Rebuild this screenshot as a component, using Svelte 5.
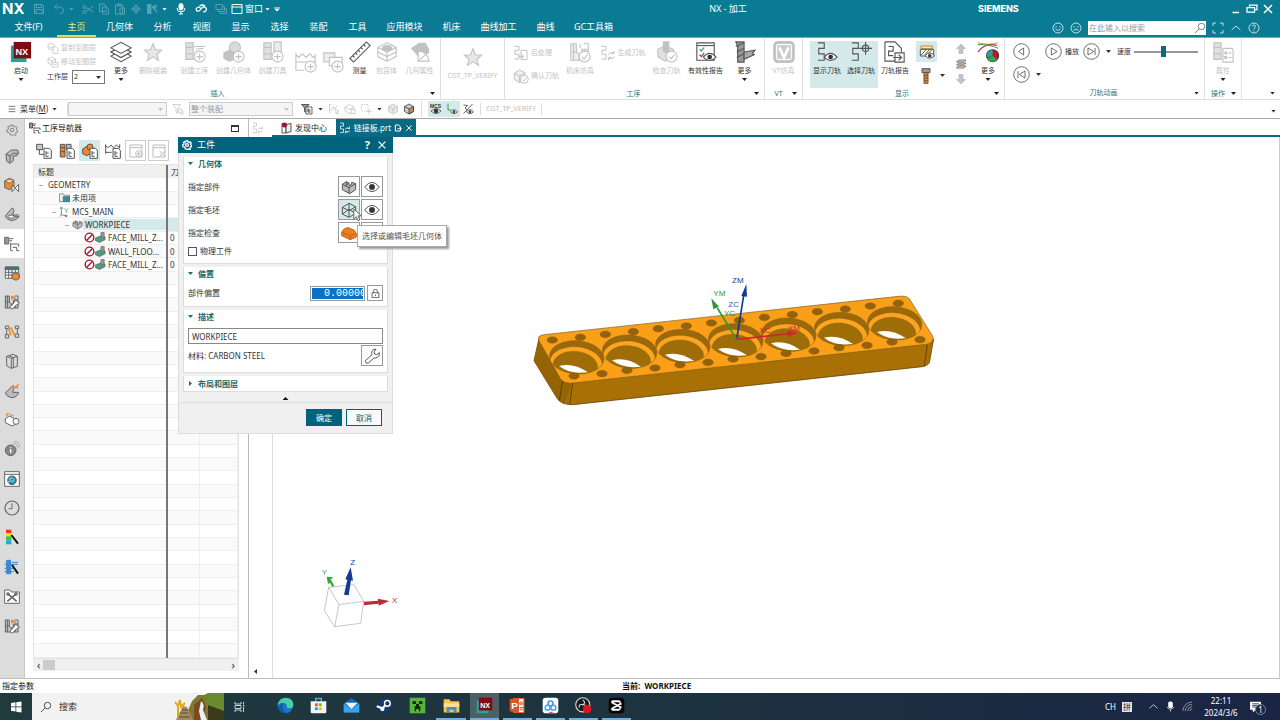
<script lang="ts">
	type Tool = { icon: string; label: string; size?: string; off?: boolean; on?: boolean; caret?: boolean };

	type TreeRow = { depth: number; label: string; icons: string[]; open?: boolean; value?: string; active?: boolean };

	// shared fragments, all on a 24 x 24 grid
	const plus = '<circle cx="17" cy="17" r="6" fill="#fff"/><path d="M17 13.5v7M13.5 17h7"/>';
	const tick = '<circle cx="17" cy="17" r="6" fill="#fff"/><path d="M14 17l2.5 2.5 4-5"/>';
	const eye = '<path d="M9 17.5q7-8 14 0q-7 7.500-14 0z" fill="#fff"/><circle cx="16" cy="17.500" r="2.600" fill="#333" stroke="none"/>';
	const track = '<path d="M2 2h7v6H3v6h6v7H2"/>';
	const block = '<path d="M2 2h8v18H2z" fill="currentColor" fill-opacity=".5"/><path d="M2 7h8M2 14h8"/>';
	const ghostCube = '<path d="M2 8l8-5 8 4v9l-8 6-8-5z" fill="currentColor" fill-opacity=".25"/><path d="M2 8l8 4 8-5M10 12v10"/>';
	const treeDoc = '<path d="M12 8h8l3 3v12H12z" fill="#fff"/><path d="M15 12v8h4M15 15h4"/>';
	const machine = '<path d="M2 3h6v9l3 3h3V9h7v12H2z" fill="currentColor" fill-opacity=".25"/><path d="M5 3v18M8 12H2M17 9v12M11 15v6"/><path d="M16 3h5v6M12 8V3"/>';

	const icons: Record<string, string> = {
		nx: '<path d="M1 5h17v18H1z" fill="#2aa198" stroke="none"/><path d="M4 1h19v18H4z" fill="#7d0d12" stroke="none"/><text x="6" y="15" font-size="10" font-weight="700" font-family="Liberation Sans, sans-serif" fill="#fff" stroke="none">NX</text>',
		copyLayer: '<path d="M2 5l6-3 6 3v8l-6 3-6-3zM2 9l6 3 6-3"/><path d="M12 10h6l4 4v9H12z" fill="#fff"/>',
		moveLayer: '<path d="M2 6l7-4 8 4v8l-7 4-8-4zM2 6l8 4 7-4M10 10v8"/><path d="M10 13h12v9H10z" fill="#fff"/><path d="M13 17h6"/>',
		layers: '<path d="M1 16.500l11 6 11-6-11-6z" fill="#fff"/><path d="M1 12l11 6 11-6-11-6z" fill="#fff"/><path d="M1 7.500l11 6 11-6-11-6z" fill="#fff"/>',
		star: '<path d="M12 3l2.700 6.500 6.800.5-5.200 4.500 1.700 6.500-6-3.700-6 3.700 1.700-6.500L2.500 10l6.800-.5z" fill="currentColor" fill-opacity=".4"/>',
		createOp: block + '<path d="M11 6h12M13 9l8-1M12 12h9"/>' + plus,
		createGeo: '<path d="M1 13l6-3 5 3v7l-5 2-6-3z" fill="currentColor"/><circle cx="13" cy="7" r="6" fill="currentColor" fill-opacity=".6"/>' + plus,
		createTool: block + '<path d="M13 1h8v12h-8z" fill="currentColor" fill-opacity=".35"/>' + plus,
		zigPlus: '<path d="M1 4l3 3 4-4 4 4 4-4 4 4 3-3M1 2v19h9M1 12h22M22 4v8"/>' + plus,
		squaresPlus: '<path d="M2 2h12v10H2z" fill="currentColor" fill-opacity=".3"/><path d="M8 7h14v9H8z" fill="#fff"/>' + plus,
		ruler: '<path d="M1 19L19 1l4 4L5 23z" fill="#fff"/><path d="M4 16l2 2M7 13l2 2M10 10l2 2M13 7l2 2M16 4l2 2"/>',
		bbox: '<path d="M2 7l10-5 10 5v10l-10 5-10-5zM2 7l10 5 10-5M12 12v10"/><ellipse cx="12" cy="8" rx="5" ry="3" fill="currentColor"/><path d="M2 12l10 5 10-5"/>',
		geomAttr: '<path d="M2 8l9-6h7l4 7v4L10 17z" fill="currentColor" stroke="none"/><path d="M10 11q10 0 12 11H10z" fill="#fff"/><path d="M10 22L20 13"/>',
		post: track + '<path d="M12 8h9v14h-9z" fill="#fff"/><path d="M8 17h8l-3-3M16 17l-3 3"/>',
		verify: ghostCube + tick,
		machineSim: machine + tick,
		generate: track + '<path d="M12 15q4-6 9-2M21 9v4h-4M22 17q-4 6-9 2M13 23v-4h4"/>',
		checkPath: '<path d="M2 9l8-4 9 4v8l-9 5-8-5z" fill="currentColor" fill-opacity=".5"/><path d="M8 1h6v10l-3 2-3-2z" fill="currentColor"/>' + tick,
		report: '<path d="M2 2h19v19H2z" fill="#fff"/><path d="M2 5h19"/><path d="M5 9l2 2 3-4" stroke="#2fae4a"/><path d="M5 15l2 2 3-4" stroke="#c02437"/>' + eye,
		cutter: '<path d="M2 1h9v22H4V6z" fill="#999"/><path d="M2 6l9-4M3 12l8-4M3 18l8-4"/><path d="M11 12l12-2-3 4 2 1-11 5z" fill="#aaa"/>',
		vt: '<rect x="1" y="1" width="22" height="22" rx="4" fill="#c9c9c9" stroke="#b5b5b5"/><rect x="4" y="4" width="16" height="16" rx="2" fill="none" stroke="#fff"/><path d="M7 7l5 11 5-11" stroke="#fff" stroke-width="3"/>',
		pathEye: track + eye,
		pathCross: track + '<path d="M17 1v14M10 8h14"/><circle cx="17" cy="8" r="3.500"/>',
		pathDoc: '<path d="M1 1h11l7 7v4M1 1v21h12"/><path d="M5 6h5v5H5v5h5"/><path d="M12 13h10v10H12z" fill="#fff"/><path d="M10 18h9l-3-3M19 18l-3 3"/>',
		hatchEye: '<path d="M3 3h17v4H3z" fill="#ffe9b8" stroke="#c98a1a"/><path d="M2 8h20v10H2z" fill="#fff"/><path d="M3 17l8-9M8 17l8-9M14 14l6-6"/>' + eye,
		bolt: '<path d="M6 1h12v6H6z" fill="#999"/><path d="M9 7h6v16H9z" fill="#e5873a" stroke="#8d4d18"/><path d="M9 12l6-2M9 16l6-2M9 20l6-2"/>',
		arrowUp: '<path d="M12 2l9 9h-5v10H8V11H3z" fill="#c4c4c4" stroke="#bbb"/>',
		arrowDown: '<path d="M12 22l9-9h-5V3H8v10H3z" fill="#c4c4c4" stroke="#bbb"/>',
		levels: '<path d="M3 8l5-4h14l-5 4zM3 14l5-4h14l-5 4zM3 20l5-4h14l-5 4z" fill="#ddd"/><path d="M7 14h8" stroke="#e5873a"/>',
		pathChart: '<path d="M1 2q12 3 22 0" stroke="#d9a52a"/><path d="M1 12Q9 1 22 5" stroke="#c02437"/><path d="M1 4q10-1 22 4" stroke="#37a34a"/><circle cx="17" cy="16" r="6.500" fill="#c8102e" stroke="#333"/><path d="M17 16V9.500A6.500 6.500 0 0 0 11 18z" fill="#19a7a0" stroke="none"/><path d="M17 16l-6 3a6.500 6.500 0 0 0 11 1z" fill="#2da84a" stroke="none"/>',
		playBack: '<circle cx="12" cy="12" r="11"/><path d="M15 7v10l-7-5z"/>',
		play: '<circle cx="12" cy="12" r="11"/><path d="M9 7v10l8-5z"/>',
		stepNext: '<circle cx="12" cy="12" r="11"/><path d="M7 7v10l8-5zM17 7v10"/>',
		stepPrev: '<circle cx="12" cy="12" r="11"/><path d="M17 7v10l-8-5zM7 7v10"/>',
		props: block + '<path d="M12 8h10l1 2v13H12z" fill="#fff"/><path d="M14 12h2v2h-2zM18 13h3M14 17h2v2h-2zM18 18h3"/>',
		save: '<path d="M3 3h15l3 3v15H3zM7 3v6h10V3M6 21v-8h12v8"/>',
		undo: '<path d="M8 3L3 8l5 5M3 8h11q7 1 7 7t-7 6"/>',
		cut: '<circle cx="5" cy="18" r="3"/><circle cx="5" cy="8" r="3"/><path d="M8 9l14 9M8 17L22 7"/>',
		copy: '<path d="M3 2h9l4 4v11H3z"/><path d="M9 8h8l4 4v10H9z"/>',
		paste: '<path d="M3 4h14v18H3zM7 2h6v4H7zM12 10h9v12h-9z"/>',
		move: '<circle cx="12" cy="12" r="6"/><path d="M12 2v20M2 12h20"/>',
		flip: '<path d="M3 3h7v18H3z" fill="currentColor"/><path d="M12 8l9-4-3 7 4 8z" fill="currentColor"/>',
		mic: '<rect x="8" y="1" width="8" height="13" rx="4" fill="currentColor"/><path d="M4 10q0 8 8 8t8-8M12 18v4M8 22h8"/>',
		touch: '<path d="M12 12q-3-5-7-3t-2 6q4 4 9-3t9-3q3 2 1 6t-6 2M9 6q6-4 11 0" stroke-width="2.500"/>',
		cascade: '<path d="M2 3h13v10H2zM6 13v4h13V7h-4M10 17v4h13V11h-4"/>',
		window: '<path d="M2 3h20v18H2zM2 8h20"/>',
		smile: '<circle cx="12" cy="12" r="10"/><path d="M8 8v3M16 8v3M7 14q5 6 10 0"/>',
		sad: '<circle cx="12" cy="12" r="10"/><path d="M8 8v3M16 8v3M7 17q5-6 10 0"/>',
		search: '<circle cx="15" cy="9" r="6.500"/><path d="M10 14l-8 8"/>',
		full: '<path d="M2 8V2h6M16 2h6v6M22 16v6h-6M8 22H2v-6"/>',
		up: '<path d="M3 16l9-8 9 8"/>',
		help: '<circle cx="12" cy="12" r="10"/><path d="M9 9q0-3 3-3t3 3q0 2-3 4v2M12 17v2"/>',
		min: '<path d="M5 19h13" stroke-width="3"/>',
		restore: '<path d="M7 9V4h15v9h-5M2 9h15v9H2z" stroke-width="2.500"/>',
		close: '<path d="M4 4l16 16M20 4L4 20" stroke-width="3"/>',
		menu: '<path d="M2 4h20M2 12h20M2 20h20" stroke-width="2"/>',
		filter: '<path d="M2 3h15l-6 8v10l-3-2v-8z"/><path d="M14 12h5v4h3v6h-4v-3h-4z"/>',
		filterDark: '<path d="M1 3h15l-5 7v9l-4-2v-7z" fill="#999"/><path d="M10 8h12v14H10z" fill="#fff"/><path d="M14 11v7h5M14 14h5" stroke-width="2"/>',
		snap: '<path d="M3 20V3h4M20 14v7h-4M6 16l5-9 3 6 4-8" /><circle cx="17" cy="17" r="3"/>',
		solid: '<path d="M2 8l9-5 9 5v8l-9 5-9-5zM2 8l9 5 9-5"/><path d="M14 13h8v8h-8z" fill="#fff"/>',
		marquee: '<path d="M3 3h13v13H3z" stroke-dasharray="3 2"/><path d="M18 12v10M13 17h10"/>',
		shade: '<path d="M3 7l9-5 9 5v10l-9 5-9-5z" fill="currentColor" fill-opacity=".4"/><path d="M3 7l9 5 9-5M12 12v10"/>',
		shadeOn: '<path d="M3 7l9-5 9 5v10l-9 5-9-5z" fill="#ccc"/><path d="M12 12l9-5v10l-9 5z" fill="#c48a5a"/><path d="M3 7l9 5"/>',
		mcs: '<text x="0" y="9" font-size="10" font-weight="700" font-family="Liberation Sans, sans-serif" fill="#333" stroke="none">MCS</text><path d="M2 16q10-9 20 0q-10 10-20 0z" fill="#fff"/><circle cx="12" cy="16" r="4" fill="#333"/>',
		axisEye: '<path d="M4 1v13h6" stroke="#2da84a" stroke-width="2"/>' + eye,
		hideEye: '<path d="M3 21L21 2M3 4l8 1-5 5 4 4"/>' + eye,
		gear: '<circle cx="12" cy="12" r="3.500"/><path d="M10 2h4l.6 3 2.400 1 2.600-1.600 2.500 2.800-1.600 2.600.8 2.200 1.700 1v3l-3 .8-1 2 1.200 2.600-3 2.100-2.400-1.800-2 .5L10.500 22l-3-1-.3-3-2-1.500-3-.3L1.500 12l3-1.500.6-2.400L3.500 5.500l2.700-2 2.400 1.700z"/>',
		railBody: '<path d="M3 9l8-6h9l2 4-3 5h-5v7l-5 4-5-3z" fill="#bbb"/><path d="M3 9l6 3v10M9 12l5-4h8"/>',
		railGeo: '<path d="M1 6l7-4 7 3v10l-7 4-7-3z" fill="#ee8a2d"/><path d="M1 6l7 3 7-4M12 12l10 10V11L12 22z" fill="#fff"/>',
		railPart: '<path d="M2 15l10-12q3 1 3 4l-2 7 8-1q2 1 1 4-5 5-11 5-7-1-9-7z" fill="#bbb"/><ellipse cx="11" cy="16" rx="5" ry="2.500" fill="#eee"/><path d="M13 14q3 3 9 2"/>',
		railNav: '<path d="M1 2h6v10H1z" fill="#999"/><path d="M8 4h6M8 7h4M10 10v12h3M10 12h12v4M13 17h6v5h4"/>',
		railTable: '<path d="M2 3h20v17H2z" fill="#fff"/><path d="M2 3h20v4H2z" fill="#197f96"/><path d="M2 11h20M2 15h20M7 3v17M12 3v17M17 3v17"/><path d="M12 14l5-2 6 2v6l-5 3-6-3z" fill="#ee8a2d"/>',
		railMachine: machine + '<path d="M12 3l6 5" stroke="#ee8a2d" stroke-width="3"/><path d="M9 20l7-8q0-3 3-3l1 3 3 1q0 3-4 3l-7 7z" fill="#fff"/>',
		railFlow: '<path d="M2 3h5v4H2zM2 16h5v5H2zM17 3h5v4h-5zM17 15h5v5h-5zM4 7v9M20 7v8"/><path d="M7 5l3 12M10 5l7 14" stroke="#ee8a2d" stroke-width="2.500"/>',
		railBook: '<path d="M4 5l10-3 6 3v15l-9 3-7-4zM4 5l7 3v15M11 8l9-3M8 4l6 3v14"/>',
		railAngle: '<path d="M2 15l10-10 3 3-2 6h9q-2 8-11 8-7-1-9-7z" fill="#bbb"/><path d="M13 3l4 4 5-5M20 3v6" stroke="#ee8a2d" stroke-width="2"/>',
		railFind: '<path d="M2 10l6-4 10 5v7l-6 3-10-5z" fill="#fff"/><path d="M2 5l3-3 10 4M5 2v5" stroke="#ee8a2d"/><circle cx="18" cy="14" r="4.500" fill="#fff"/>',
		railInfo: '<circle cx="10" cy="14" r="8" fill="#888"/><path d="M10 12v6M10 9v1" stroke="#fff" stroke-width="2"/><path d="M14 3q6 1 8 8M15 0q8 1 9 9" stroke="#aaa"/>',
		railWeb: '<path d="M1 1h22v22H1zM1 5h22" fill="#fff"/><circle cx="12" cy="14" r="6.500" fill="#1d87a0"/><path d="M8 12l4-2 3 3-2 4zM6 16h3" stroke="#bfe6ee"/>',
		railClock: '<circle cx="12" cy="12" r="10.500" stroke-width="1.800"/><path d="M12 5v8H7"/>',
		railColor: '<path d="M3 1h8v5H3z" fill="#e33" stroke="none"/><path d="M3 6h8v5H3z" fill="#fd0" stroke="none"/><path d="M3 11h8v6H3z" fill="#3c3" stroke="none"/><path d="M3 17h8v6H3z" fill="#2ad" stroke="none"/><path d="M11 9l10 13" stroke="#111" stroke-width="3"/>',
		railAnalyse: '<path d="M4 2h6v20H4z" fill="#3f86c6" stroke="#3f86c6"/><path d="M1 8h20M1 14h14M1 19h14M12 5h9" stroke="#3f86c6"/><path d="M12 9l9 13" stroke="#111" stroke-width="3"/>',
		railTools: '<path d="M1 3h8l2 3h12v17H1z" fill="#fff"/><path d="M5 8l14 12M19 8L5 20" stroke-width="2.500"/><circle cx="6" cy="9" r="2"/><circle cx="18" cy="9" r="2"/>',
		treeOp: '<path d="M1 2h9v8H1z" fill="#ccc"/><path d="M5 10v7h7"/>' + treeDoc,
		treeTool: '<path d="M2 2h7v19H2z" fill="#e5873a"/><path d="M2 7h7M2 13h7M11 2h7v8h-7z" fill="#bbb"/>' + treeDoc,
		treeGeo: '<path d="M1 9l6-4 6 3v8l-6 3-6-3z" fill="#ee8a2d"/><circle cx="12" cy="6" r="4.500" fill="#ee8a2d"/>' + treeDoc,
		treeZig: '<path d="M1 4l4 3 4-4 4 4 4-4 5 4M1 2v14M1 14h9M22 2v6"/>' + treeDoc,
		newTab: '<path d="M3 3h18v18H3zM3 7h18"/><circle cx="16" cy="16" r="4.500" fill="#fff"/><path d="M16 13.500v5M13.500 16h5"/>',
		closeTab: '<path d="M3 3h18v18H3zM3 7h18"/><path d="M13 12l8 8M21 12l-8 8"/>',
		folder: '<path d="M1 4h8l2 3h12v14H1z" fill="#e6f3f5"/><path d="M9 10h14v11H9z" fill="#2b93a3"/>',
		csys: '<path d="M5 3v16l12 3M5 19L2 23" stroke="#555"/><path d="M2 6l3-4 3 4" stroke="#2da84a" stroke-width="2"/><path d="M12 5l4 5 4-5M16 10v5" stroke="#2da84a"/><path d="M13 19l5 3-5 1" stroke="#c02437"/>',
		work: '<path d="M2 8l6-4 4 2v4l4-2V5l6 2v9l-9 6-11-6z" fill="#bbb"/><path d="M2 8l10 5 10-6M12 13v9M8 4v7M12 6l-4 3"/>',
		ban: '<circle cx="12" cy="12" r="9.500" stroke="#a3142a" stroke-width="3" fill="#fff"/><path d="M5.500 5.500l13 13M5.500 18.500l13-13" stroke="none"/><path d="M5.500 18.500l13-13" stroke="#a3142a" stroke-width="3"/>',
		mill: '<path d="M1 13l12-5 9 3v6l-12 6-9-4z" fill="#4d9a86"/><path d="M13 1h7v10l-4 2-3-2z" fill="#999"/>',
		view: '<path d="M1 12q11-14 22 0q-11 14-22 0z"/><circle cx="12" cy="12" r="4" fill="#333"/>',
		wire: '<path d="M2 8l10-6 10 5v10l-10 6-10-5zM2 8l10 5 10-6M12 13v10M12 2v9l10 6M2 18l10-7"/>',
		check: '<path d="M1 11q3-7 10-7l9 4 3 5v5l-9 4-13-6z" fill="#ee7d1c" stroke="#c2661a"/><path d="M1 11l13 5 9-3M14 16v6" stroke="#c2661a"/>',
		lock: '<path d="M3 10h18v13H3zM7 10V6q0-5 5-5t5 5v4M12 15v4" stroke-width="2"/>',
		wrench: '<path d="M2 19L12 10q-2-6 3-8l3 0-3 4 1 3 3 1 4-3q1 7-6 8l-2 0L6 23q-3 1-4-4z"/>',
		discover: '<path d="M2 3h8v19H2z" fill="#fff"/><path d="M10 5l10-2v16l-10 3z" fill="#eee"/><circle cx="7" cy="6" r="5" fill="#9d1330" stroke="none"/>',
		pin: '<path d="M4 3h10l5 5v13H4z" stroke-width="3"/><path d="M10 14h12M18 10l4 4-4 4" stroke-width="2.500"/>',
		windows: '<path d="M2 4l9-1.500V11H2zM12.500 2.300L23 1v10H12.500zM2 12.500h9V21l-9-1.500zM12.500 12.500H23v10.500l-10.500-1.500z" fill="#fff" stroke="none"/>',
		taskView: '<path d="M2 2v4h12V2M2 22v-4h12v4M2 9h12v6H2zM19 2v5M19 11v11M18 9h3" stroke="#fff"/>',
		edge: '<circle cx="12" cy="12" r="11" fill="#1878c8" stroke="none"/><path d="M1 10Q4 1 13 1q10 1 10 10 0 5-6 5-4 0-3-3 0-5-6-5Q3 8 1 12z" fill="#46cfa0" stroke="none"/><path d="M8 12q-2 8 7 11-10 1-13-8 1-6 7-6z" fill="#135aa6" stroke="none"/>',
		store: '<path d="M8 6V2h8v4" stroke="#3fb5e8" stroke-width="2"/><path d="M1 6h22v15q0 2-2 2H3q-2 0-2-2z" fill="#f4f4f4" stroke="none"/><path d="M7 9h4v4H7z" fill="#f25022" stroke="none"/><path d="M12.500 9h4v4h-4z" fill="#7fba00" stroke="none"/><path d="M7 14.500h4v4H7z" fill="#00a4ef" stroke="none"/><path d="M12.500 14.500h4v4h-4z" fill="#ffb900" stroke="none"/>',
		mail: '<path d="M1 9l11-8 11 8v13H1z" fill="#1267b0" stroke="none"/><path d="M3 8h18l-9 9z" fill="#e9f4fb" stroke="none"/><path d="M1 9l11 8 11-8v13H1z" fill="#39a5e6" stroke="none"/>',
		steam: '<circle cx="12" cy="12" r="11" fill="#14386b" stroke="none"/><circle cx="16" cy="9" r="4" stroke="#fff" stroke-width="2"/><path d="M1 13l8 3 4-4" stroke="#fff" stroke-width="3"/><circle cx="9" cy="17" r="3" fill="#fff" stroke="none"/>',
		creeper: '<path d="M1 1h22v22H1z" fill="#57b53c" stroke="none"/><path d="M5 6h5v4H5zM14 6h5v4h-5zM10 10h4v3h2v7h-2v-3h-4v3H8v-7h2z" fill="#10240c" stroke="none"/>',
		explorer: '<path d="M1 3h8l2 3h12v16H1z" fill="#f3c64b" stroke="none"/><path d="M1 9h22v5H1z" fill="#ffe08a" stroke="none"/><path d="M5 22v-8h14v8h-4v-4H9v4z" fill="#3c8fd0" stroke="none"/>',
		ppt: '<path d="M7 2h14v20H7z" fill="#fff" stroke="#e06a3c"/><path d="M1 3l13-2v22L1 20z" fill="#d95426" stroke="none"/><text x="3" y="17" font-size="14" font-weight="700" font-family="Liberation Sans, sans-serif" fill="#fff" stroke="none">P</text><circle cx="17" cy="9" r="3" fill="#e8895f" stroke="none"/><path d="M15 15h5M15 18h5" stroke="#d95426"/>',
		netdisk: '<rect x="1" y="1" width="22" height="22" rx="4" fill="#fff" stroke="none"/><circle cx="12" cy="9" r="3.500" stroke="#2f8ef0" stroke-width="2"/><circle cx="8" cy="15" r="3.500" stroke="#27b0ea" stroke-width="2"/><circle cx="16" cy="15" r="3.500" stroke="#5a8fe8" stroke-width="2"/><path d="M10 22h5" stroke="#e8506a" stroke-width="2"/>',
		obs: '<circle cx="11" cy="11" r="10" fill="#1c1c20" stroke="#ddd"/><path d="M11 4q5 4 0 7q-6-2-5 4M11 11q6 0 6 6" stroke="#ddd"/><circle cx="17" cy="17" r="6" fill="#e0131d" stroke="none"/>',
		capcut: '<rect x="1" y="1" width="22" height="22" rx="5" fill="#050505" stroke="none"/><path d="M19 9L6 16q-1 2 1 2h8q2 0 2-2M19 15L6 8q-1-2 1-2h8q2 0 2 2" stroke="#fff" stroke-width="2.500"/>',
		trayMic: '<rect x="7" y="1" width="10" height="15" rx="4" fill="#fff" stroke="none"/><path d="M4 13q8 10 16 0M12 18v5" stroke="#fff"/>',
		wifi: '<path d="M2 22Q3 4 22 2M7 22Q8 9 22 7M12 22q1-9 10-10M17 22q0-4 5-5" stroke="#bbb"/>',
		note: '<path d="M2 3h20v15H12l-5 5v-5H2z" fill="#fff" stroke="none"/><path d="M6 7h12M6 10h12M6 13h8" stroke="#1a2740"/>',
	};

	const menus = ["文件(F)", "主页", "几何体", "分析", "视图", "显示", "选择", "装配", "工具", "应用模块", "机床", "曲线加工", "曲线", "GC工具箱"];

	const insertTools: Tool[] = [
		{ icon: "createOp", label: "创建工序", size: "wide", off: true },
		{ icon: "createGeo", label: "创建几何体", size: "wide", off: true },
		{ icon: "createTool", label: "创建刀具", size: "wide", off: true },
		{ icon: "zigPlus", label: "", size: "narrow", off: true },
		{ icon: "squaresPlus", label: "", size: "narrow", off: true },
		{ icon: "ruler", label: "测量", size: "narrow" },
		{ icon: "bbox", label: "包容体", size: "narrow", off: true },
		{ icon: "geomAttr", label: "几何属性", size: "wide", off: true },
	];

	const railIcons = [
		"railBody", "railGeo", "railPart", "railNav", "railTable", "railMachine", "railFlow", "railBook", "railAngle",
		"railFind", "railInfo", "railWeb", "railClock", "railColor", "railAnalyse", "railTools", "railMachine",
	];

	const rows: TreeRow[] = [
		{ depth: 0, label: "GEOMETRY", icons: [], open: true },
		{ depth: 1, label: "未用项", icons: ["folder"] },
		{ depth: 1, label: "MCS_MAIN", icons: ["csys"], open: true },
		{ depth: 2, label: "WORKPIECE", icons: ["work"], open: true, active: true },
		{ depth: 3, label: "FACE_MILL_Z...", icons: ["ban", "mill"], value: "0" },
		{ depth: 3, label: "WALL_FLOO...", icons: ["ban", "mill"], value: "0" },
		{ depth: 3, label: "FACE_MILL_Z...", icons: ["ban", "mill"], value: "0" },
	];
	const emptyRows = Array(29).fill(0);

	const apps = ["edge", "store", "mail", "steam", "creeper", "explorer", "nx", "ppt", "netdisk", "obs", "capcut"];
	const bores = [0, 1, 2, 3, 4, 5, 6];
	const screws = [[97, 240], [181, 232], [162, 348], [246, 341]];

	let dialogOpen = $state(true);
	let activeMenu = $state("主页");
	let activeRail = $state(3);
	let workLayer = $state("2");
	let speed = $state(46);
	let physical = $state(false);
	let partOffset = $state("0.00000");
	let description = $state("WORKPIECE");
	let closed = $state<Record<string, boolean>>({ layout: true });

	function menuSize(label: string): string {
		if (label.length > 4) return "menu-5";
		return `menu-${label.length}`;
	}

	function toggle(key: string) {
		closed = { ...closed, [key]: !closed[key] };
	}
</script>

{#snippet icon(name: string, cls = "")}
	<svg class="icon {cls}" viewBox="0 0 24 24" aria-hidden="true">{@html icons[name]}</svg>
{/snippet}

{#snippet tool(item: Tool)}
	<button type="button" class="tool {item.size ?? 'mid'}" class:off={item.off} class:on={item.on} class:bare={!item.label} aria-label={item.label || item.icon}>
		{@render icon(item.icon, "big")}
		{#if item.label}<span>{item.label}</span>{/if}
		{#if item.caret}<i class="caret"></i>{/if}
	</button>
{/snippet}

{#snippet rowTool(name: string, label: string, cls = "")}
	<button type="button" class="row-tool off {cls}">{@render icon(name, cls ? "medium" : "small")}<span>{label}</span></button>
{/snippet}

{#snippet sectionHead(key: string, label: string)}
	<button type="button" class="section-head" aria-expanded={!closed[key]} onclick={() => toggle(key)}>
		<i class="caret" class:side={closed[key]}></i>{label}
	</button>
{/snippet}

<div class="app">
	<header class="top">
		<div class="title-bar">
			<div class="quick">
				<strong class="logo">NX</strong>
				{#each ["save", "|", "undo", "v", "|", "cut", "copy", "paste", "move", "flip", "V", "|", "mic", "|", "touch", "|", "cascade", "window"] as name}
					{#if name === "|"}
						<span class="quick-gap"></span>
					{:else if name === "v" || name === "V"}
						<i class="caret" class:faint={name === "v"}></i>
					{:else}
						<button type="button" class="quick-button" class:faint={!["mic", "touch", "window"].includes(name)} aria-label={name}>{@render icon(name, "quick-icon")}</button>
					{/if}
				{/each}
				<span>窗口</span><i class="caret"></i><i class="caret lined"></i>
			</div>
			<div class="title">NX - 加工</div>
			<strong class="brand">SIEMENS</strong>
			<div class="window-buttons">
				{#each ["min", "restore", "close"] as name}
					<button type="button" aria-label={name}>{@render icon(name, "small")}</button>
				{/each}
			</div>
		</div>
		<div class="menu-row">
			<nav>
				{#each menus as item}
					<button type="button" class="menu {menuSize(item)}" class:active={item === activeMenu} onclick={() => activeMenu = item}>{item}</button>
				{/each}
			</nav>
			<div class="menu-right">
				{@render icon("smile", "face")}
				{@render icon("sad", "face")}
				<label class="search">
					<input type="text" placeholder="在此输入以搜索" aria-label="搜索" />
					{@render icon("search", "face")}
				</label>
				{@render icon("full", "face")}
				{@render icon("up", "face")}
				{@render icon("help", "face")}
			</div>
		</div>
	</header>

	<div class="ribbon">
		<section class="group insert">
			<div class="tools">
				{@render tool({ icon: "nx", label: "启动", caret: true })}
				<div class="stack layer-stack">
					{@render rowTool("copyLayer", "复制至图层")}
					{@render rowTool("moveLayer", "移动至图层")}
					<label class="layer">工作层
						<span class="select"><select bind:value={workLayer}><option>1</option><option>2</option></select></span>
					</label>
				</div>
				{@render tool({ icon: "layers", label: "更多", caret: true })}
				{@render tool({ icon: "star", label: "删除组装", off: true })}
				<span class="tool-gap"></span>
				{#each insertTools as item}{@render tool(item)}{/each}
			</div>
			<footer><span>插入</span><i class="caret"></i></footer>
		</section>
		<section class="group verify">
			<div class="tools">
				{@render tool({ icon: "star", label: "CGT_TP_VERIFY", off: true, size: "full" })}
			</div>
		</section>
		<section class="group operation">
			<div class="tools">
				<div class="stack">
					{@render rowTool("post", "后处理", "tall")}
					{@render rowTool("verify", "确认刀轨", "tall")}
				</div>
				{@render tool({ icon: "machineSim", label: "机床仿真", size: "wide", off: true })}
				<div class="stack">{@render rowTool("generate", "生成刀轨", "tall")}</div>
				{@render tool({ icon: "checkPath", label: "检查刀轨", size: "wide", off: true })}
				{@render tool({ icon: "report", label: "有效性报告", size: "wide" })}
				{@render tool({ icon: "cutter", label: "更多", size: "wide", caret: true })}
			</div>
			<footer><span>工序</span><i class="caret"></i></footer>
		</section>
		<section class="group vt">
			<div class="tools">{@render tool({ icon: "vt", label: "VT仿真", size: "full", off: true })}</div>
			<footer><span>VT</span><i class="caret"></i></footer>
		</section>
		<section class="group display">
			<div class="tools">
				{@render tool({ icon: "pathEye", label: "显示刀轨", size: "lit", on: true })}
				{@render tool({ icon: "pathCross", label: "选择刀轨", size: "lit", on: true })}
				{@render tool({ icon: "pathDoc", label: "刀轨报告", size: "lit" })}
				<div class="stack pair">
					<button type="button" class="mini on" aria-label="显示毛坯">{@render icon("hatchEye", "medium")}</button>
					<button type="button" class="mini" aria-label="显示刀具">{@render icon("bolt", "medium")}<i class="caret"></i></button>
				</div>
				<div class="stack arrows">
					{#each ["arrowUp", "levels", "arrowDown"] as name}
						<button type="button" class="mini" aria-label={name}>{@render icon(name, "small")}</button>
					{/each}
				</div>
				{@render tool({ icon: "pathChart", label: "更多", caret: true })}
			</div>
			<footer><span>显示</span><i class="caret"></i></footer>
		</section>
		<section class="group motion">
			<div class="tools playback">
				<div class="play-row">
					<button type="button" aria-label="后退">{@render icon("playBack", "round")}</button>
					<button type="button" class="play">{@render icon("play", "round")}播放</button>
					<button type="button" aria-label="下一步">{@render icon("stepNext", "round")}</button>
					<i class="caret"></i>
					<label class="speed">速度 <input type="range" bind:value={speed} /></label>
				</div>
				<div class="play-row">
					<button type="button" aria-label="上一步">{@render icon("stepPrev", "round")}</button>
					<i class="caret"></i>
				</div>
			</div>
			<footer><span>刀轨动画</span><i class="caret"></i></footer>
		</section>
		<section class="group manage">
			<div class="tools">{@render tool({ icon: "props", label: "属性", size: "full", off: true, caret: true })}</div>
			<footer><span>操作</span><i class="caret"></i></footer>
		</section>
		<section class="group rest"><footer><i class="caret"></i></footer></section>
	</div>

	<div class="selection-bar">
		<button type="button" class="menu-button">{@render icon("menu", "tiny")}<span>菜单(<u>M</u>)</span><i class="caret"></i></button>
		<span class="select filter-type off"><select disabled aria-label="类型过滤器"><option></option></select></span>
		<span class="bar-icon off">{@render icon("filter", "small")}</span>
		<span class="select filter-scope off"><select disabled aria-label="选择范围"><option>整个装配</option></select></span>
		<div class="bar-tools">
			<button type="button" class="bar-icon" aria-label="过滤">{@render icon("filterDark", "small")}</button><i class="caret"></i>
			{#each ["snap", "solid", "marquee"] as name}
				<button type="button" class="bar-icon off" aria-label={name}>{@render icon(name, "small")}</button>
			{/each}
			<i class="caret"></i>
			<button type="button" class="bar-icon off" aria-label="shade">{@render icon("shade", "small")}</button>
			<button type="button" class="bar-icon" aria-label="shaded">{@render icon("shadeOn", "small")}</button>
		</div>
		<div class="bar-tools lined-left">
			<button type="button" class="bar-icon on" aria-label="MCS">{@render icon("mcs", "small")}</button>
			<button type="button" class="bar-icon on" aria-label="WCS">{@render icon("axisEye", "small")}</button>
			<button type="button" class="bar-icon" aria-label="隐藏">{@render icon("hideEye", "small")}</button>
		</div>
		<span class="verify-name">CGT_TP_VERIFY</span>
		<i class="caret bar-end"></i>
	</div>

	<main class="body">
		<aside class="rail">
			<button type="button" class="rail-gear" aria-label="设置">{@render icon("gear", "small")}</button>
			<div class="rail-items">
				{#each railIcons as name, i}
					<button type="button" class="rail-item" class:active={i === activeRail} aria-label={name} onclick={() => activeRail = i}>{@render icon(name, "medium")}</button>
				{/each}
			</div>
		</aside>

		<section class="navigator">
			<div class="nav-title">{@render icon("railNav", "small")}<h2>工序导航器</h2><span class="maximise"></span></div>
			<div class="nav-tools">
				{#each ["treeOp", "treeTool", "treeGeo", "treeZig", "newTab", "closeTab"] as name}
					<button type="button" class="nav-tool" class:on={name === "treeGeo"} class:boxed={name.endsWith("Tab")} aria-label={name}>{@render icon(name, "medium")}</button>
				{/each}
			</div>
			<div class="tree">
				<table>
					<thead><tr><th class="name-col">标题</th><th class="path-col">刀</th><th></th></tr></thead>
					<tbody>
						{#each rows as row}
							<tr class:active={row.active}>
								<td>
									<div class="node depth-{row.depth}">
										{#if row.depth < 3}<span class="twisty">{row.open ? "−" : ""}</span>{/if}
										{#each row.icons as name}{@render icon(name, "node-icon")}{/each}
										<span class="node-label">{row.label}</span>
									</div>
								</td>
								<td>{row.value ?? ""}</td>
								<td></td>
							</tr>
						{/each}
						{#each emptyRows as _}<tr><td></td><td></td><td></td></tr>{/each}
					</tbody>
				</table>
			</div>
			<div class="scrollbar"><span>‹</span><span class="thumb"></span><span class="scroll-end">›</span></div>
		</section>

		<section class="workspace">
			<div class="tabs">
				<span class="tab-ghost off">{@render icon("generate", "small")}</span>
				<button type="button" class="tab">{@render icon("discover", "small")}发现中心</button>
				<button type="button" class="tab current">{@render icon("generate", "small")}链接板.prt {@render icon("pin", "tiny")}{@render icon("close", "tiny thin")}</button>
			</div>
			<div class="view">
				<div class="gutter"><i class="caret left"></i></div>
				<div class="canvas">
					<svg class="part" viewBox="0 0 1290 480" role="img" aria-label="链接板">
						<defs>
							<clipPath id="bore"><ellipse cx="170" cy="292" rx="82" ry="50" transform="rotate(4 170 292)" /></clipPath>
						</defs>
						<path d="M58 230L42 302L113 418Q128 435 160 434L1208 320Q1228 316 1229 304L1241 238L155 366L122 358z" fill="#a87005" stroke="#4d3508" stroke-width="2" />
						<path d="M58 230L42 302L113 418Q120 427 133 433L156 368L122 358z" fill="#946304" />
						<path d="M128 362L118 422M158 368L149 434M1222 254L1213 318" stroke="#3d2a05" stroke-width="2" />
						<path d="M57 242Q50 227 72 224L1136 109Q1158 106 1168 116L1239 230Q1243 248 1220 253L160 369Q134 372 122 358z" fill="#fa9f18" stroke="#7a5c17" stroke-width="2" />
						{#each bores as i}
							<g transform="translate({i * 159} {i * -17})">
								<g clip-path="url(#bore)">
									<path d="M80 230h180v120H80z" fill="#9b680b" />
									<ellipse cx="168" cy="311" rx="79" ry="51" fill="#fda51f" stroke="#7a5c17" transform="rotate(5 168 311)" />
									<ellipse cx="166" cy="318" rx="67" ry="44" fill="#9f6d08" stroke="#7a5c17" transform="rotate(5 166 318)" />
									<path d="M117 318Q160 307 204 337Q150 344 117 318z" fill="#fff" />
								</g>
								<ellipse cx="170" cy="292" rx="82" ry="50" fill="none" stroke="#7a5c17" transform="rotate(4 170 292)" />
								{#each screws as [x, y]}
									<ellipse cx={x} cy={y} rx="16" ry="10" fill="#93620a" stroke="#7a5c17" />
								{/each}
							</g>
						{/each}
						<g class="axes">
							<path d="M650 238L672 100" stroke="#103c94" /><path d="M679 72L664 108L681 110z" fill="#103c94" stroke="none" />
							<path d="M650 238L592 144" stroke="#2b9a35" /><path d="M574 115L580 148L597 140z" fill="#2b9a35" stroke="none" />
							<path d="M650 238L806 221" stroke="#cf2630" /><path d="M834 218L802 212L805 230z" fill="#cf2630" stroke="none" />
							<text x="636" y="68" fill="#103c94">ZM</text>
							<text x="580" y="108" fill="#2b9a35">YM</text>
							<text x="625" y="140" fill="#325ba8">ZC</text>
							<text x="612" y="167" fill="#2b9a35">YC</text>
							<text x="718" y="220" fill="#cf2630">XC</text>
							<text x="804" y="212" fill="#cf2630">XM</text>
						</g>
					</svg>
					<svg class="triad" viewBox="0 0 480 330" role="img" aria-label="XYZ">
						<path d="M146 142L222 134L251 184L242 250L164 260L133 212zM146 142L177 194L251 184M177 194L164 260" fill="none" stroke="#aaa" stroke-width="2" />
						<path d="M163 138L152 118L160 112L140 110L144 132L150 128L157 141z" fill="#35a83c" />
						<path d="M192 164L202 119L196 118L212 82L219 122L213 121L206 166z" fill="#103c94" />
						<path d="M252 185L294 182L294 176L328 183L296 197L296 191L252 196z" fill="#c02a38" />
						<text x="125" y="106" fill="#35a83c">Y</text>
						<text x="211" y="75" fill="#103c94">Z</text>
						<text x="336" y="189" fill="#c02a38">X</text>
					</svg>
				</div>
			</div>
		</section>

		{#if dialogOpen}
			<div class="dialog" role="dialog" aria-label="工件">
				<div class="dialog-title">
					{@render icon("gear", "gear bold")}<span>工件</span>
					<button type="button" class="ask">?</button>
					<button type="button" aria-label="关闭" onclick={() => dialogOpen = false}>{@render icon("close", "gear")}</button>
				</div>
				<div class="dialog-body">
					<section class="panel">
						{@render sectionHead("geometry", "几何体")}
						{#if !closed.geometry}
							<div class="fields">
								<div class="field"><span>指定部件</span>
									<button type="button" class="square" aria-label="指定部件">{@render icon("work", "medium")}</button>
									<button type="button" class="square" aria-label="显示部件">{@render icon("view", "medium")}</button>
								</div>
								<div class="field"><span>指定毛坯</span>
									<button type="button" class="square on" aria-label="指定毛坯">{@render icon("wire", "medium")}</button>
									<button type="button" class="square" aria-label="显示毛坯">{@render icon("view", "medium")}</button>
								</div>
								<div class="field"><span>指定检查</span>
									<button type="button" class="square" aria-label="指定检查">{@render icon("check", "medium")}</button>
									<button type="button" class="square" aria-label="显示检查">{@render icon("view", "medium")}</button>
								</div>
								<label class="tick"><input type="checkbox" bind:checked={physical} />物理工件</label>
							</div>
						{/if}
					</section>
					<section class="panel">
						{@render sectionHead("offset", "偏置")}
						{#if !closed.offset}
							<div class="offset-row">
								<label for="offset">部件偏置</label>
								<input id="offset" type="text" bind:value={partOffset} />
								<button type="button" class="lock" aria-label="锁定">{@render icon("lock", "small")}</button>
							</div>
						{/if}
					</section>
					<section class="panel">
						{@render sectionHead("description", "描述")}
						{#if !closed.description}
							<div class="fields">
								<input type="text" class="description" aria-label="描述" bind:value={description} />
								<div class="field"><span>材料: CARBON STEEL</span>
									<button type="button" class="square" aria-label="材料">{@render icon("wrench", "medium")}</button>
								</div>
							</div>
						{/if}
					</section>
					<section class="panel">{@render sectionHead("layout", "布局和图层")}</section>
					<div class="fold"><i class="caret top-up"></i></div>
				</div>
				<div class="dialog-actions">
					<button type="button" class="primary">确定</button>
					<button type="button" onclick={() => dialogOpen = false}>取消</button>
				</div>
				<div class="tooltip" role="tooltip">选择或编辑毛坯几何体</div>
				<svg class="cursor" viewBox="0 0 12 16" aria-hidden="true"><path d="M1 1v12l3-3 2 5 2-1-2-5h4z" fill="#fff" stroke="#555" /></svg>
			</div>
		{/if}
	</main>

	<div class="status"><span>指定参数</span><strong>当前: &nbsp;WORKPIECE</strong></div>

	<footer class="taskbar">
		<button type="button" class="start" aria-label="开始">{@render icon("windows", "small")}</button>
		<label class="task-search">
			{@render icon("search", "small")}
			<input type="text" placeholder="搜索" aria-label="搜索" />
			<svg class="scene" viewBox="0 0 50 27" preserveAspectRatio="none" aria-hidden="true">
				<path d="M10 27L18 8L24 2L34 2Q42 -1 50 2V27z" fill="#7b7a30" />
				<path d="M30 2L34 0h16v27H38z" fill="#6a8a2c" />
				<path d="M20 12l8-7 4 9-4 13h-8z" fill="#7c4a22" />
				<path d="M27 8q4 3 2 9l4 10h-6l-2-9z" fill="#eaf2f7" />
				<path d="M34 12l16 6v9H34z" fill="#3a3a1c" />
				<path d="M2 27l7-14 4 1 6 13z" fill="#a48b5e" />
				<path d="M5 24h11M6 20h8M8 17h6" stroke="#5a4a30" />
				<path d="M1 9l3 4 2-6 1 7 4-4M4 14v10" stroke="#e0a81c" stroke-width="2" fill="none" />
			</svg>
		</label>
		<button type="button" class="start" aria-label="任务视图">{@render icon("taskView", "small")}</button>
		<div class="apps">
			{#each apps as name, i}
				<button type="button" class="app-button" class:running={i > 4} class:front={name === "nx"} aria-label={name}>{@render icon(name, "app-icon")}</button>
			{/each}
		</div>
		<div class="tray">
			<span class="ime">CH</span><span class="ime boxed">拼</span>
			{@render icon("up", "tray-icon")}{@render icon("trayMic", "tray-icon")}{@render icon("wifi", "tray-icon")}
			<div class="clock"><time>22:11</time><time>2024/3/6</time></div>
			<div class="notice">{@render icon("note", "note-icon")}<span class="badge">1</span></div>
		</div>
	</footer>
</div>

<style>
	:global(body) {
		background: #fff;
	}

	.app {
		display: flex;
		flex-direction: column;
		min-height: 100vh;
		color: #333;
		font: 8px/12px "Noto Sans", "Noto Sans CJK SC", sans-serif;
	}

	.app :global(*) {
		box-sizing: border-box;
	}

	button,
	input,
	select {
		margin: 0;
		padding: 0;
		border: 0;
		background: none;
		color: inherit;
		font: inherit;
		min-width: 0;
	}

	button {
		display: flex;
		align-items: center;
		justify-content: center;
		white-space: nowrap;
	}

	.icon {
		flex: none;
		display: block;
		width: 12px;
		height: 12px;
		fill: none;
		stroke: currentColor;
		stroke-width: 1.5;
	}

	.icon.tiny { width: 8px; height: 8px; }
	.icon.gear { width: 10px; height: 10px; }
	.icon.medium { width: 16px; height: 16px; }
	.icon.round { width: 17px; height: 17px; stroke-width: 1.2; }
	.icon.big { width: 22px; height: 22px; stroke-width: 1.2; }
	.icon.bold { stroke-width: 3; }
	.icon.quick-icon { stroke-width: 2; }

	.caret {
		flex: none;
		width: 5px;
		height: 3px;
		background: currentColor;
		clip-path: polygon(0 0, 100% 0, 50% 100%);
	}

	.caret.side { width: 3px; height: 5px; margin: 0 1px; clip-path: polygon(0 0, 100% 50%, 0 100%); }
	.caret.left { width: 3px; height: 5px; clip-path: polygon(100% 0, 100% 100%, 0 50%); }
	.caret.top-up { width: 6px; height: 3px; clip-path: polygon(50% 0, 100% 100%, 0 100%); }

	.off { color: #c2c2c2; }
	.on { background: #d3e9ea; }
	.faint { opacity: 0.3; }

	/* title bar and menus */
	.top {
		background: #0b7a93;
		border-bottom: 1px solid #5fb3c4;
		color: #fff;
		font-size: 9px;
	}

	.title-bar,
	.menu-row,
	.quick,
	.menu-right,
	.window-buttons {
		display: flex;
		align-items: center;
	}

	.title-bar { height: 18px; }
	.quick { flex: 0 0 478px; }
	.quick .caret { margin: 0 2px; }
	.quick .caret.lined { width: 6px; height: 5px; clip-path: polygon(0 0, 100% 0, 100% 20%, 0 20%, 0 40%, 100% 40%, 50% 100%, 0 40%); }
	.logo { width: 31px; padding-left: 2px; font: 700 15px/18px "Inter", sans-serif; }
	.quick-button { width: 16px; height: 16px; }
	.quick-gap { width: 4px; }
	.title { flex: 1; text-align: center; }
	.brand { width: 252px; font: 800 9px/12px "Inter", sans-serif; }
	.window-buttons { gap: 4px; width: 50px; }

	.menu-row { justify-content: space-between; height: 19px; }
	nav { display: flex; }
	.menu { height: 18px; border-bottom: 2px solid transparent; }
	.menu.active { border-color: #e0d95c; color: #f0ea70; }
	.menu-2 { width: 39px; }
	.menu-3 { width: 47px; }
	.menu-4 { width: 55px; }
	.menu-5 { width: 57px; }
	.menu-right { gap: 6px; padding-right: 20px; }

	.search {
		display: flex;
		align-items: center;
		width: 118px;
		height: 14px;
		background: #fff;
		color: #555;
	}

	.search input { flex: 1; padding: 0 1px; font-size: 8px; }
	.search input::placeholder { color: #999; }

	/* ribbon */
	.ribbon {
		display: flex;
		height: 62px;
		border-bottom: 1px solid #ddd;
		font-size: 7px;
		line-height: 10px;
	}

	.group {
		flex: none;
		display: flex;
		flex-direction: column;
		justify-content: space-between;
		padding-top: 3px;
		border-right: 1px solid #e0e0e0;
	}

	.insert { width: 441px; padding-left: 5px; }
	.verify { width: 64px; padding-top: 8px; }
	.operation { width: 260px; padding-left: 8px; }
	.vt { width: 38px; }
	.display { width: 202px; padding-left: 7px; }
	.motion { width: 200px; padding-left: 8px; }
	.manage { width: 37px; }
	.rest { flex: 1; border: 0; justify-content: flex-end; }

	.group footer {
		display: flex;
		align-items: center;
		height: 12px;
		padding-right: 5px;
		color: #222;
	}

	.group footer span { flex: 1; text-align: center; color: #2b7676; }
	.rest footer { justify-content: flex-end; }
	.tools { display: flex; align-items: flex-start; }

	.tool {
		flex: none;
		flex-direction: column;
		justify-content: flex-start;
		height: 47px;
		gap: 3px;
	}

	.tool .caret { margin-top: -1px; background: #222; }
	.tool:not(.off) .icon,
	.mini .icon,
	.round { color: #555; }
	.tool.bare { height: 42px; justify-content: center; }
	.narrow { width: 27px; }
	.mid { width: 32px; }
	.wide { width: 39px; }
	.lit { width: 34px; }
	.full { width: 100%; }
	.tool-gap { width: 6px; }

	.stack { display: flex; flex-direction: column; width: 50px; }
	.layer-stack { width: 68px; padding-left: 10px; }
	.row-tool { justify-content: flex-start; gap: 2px; height: 14px; }
	.row-tool.tall { height: 23px; }
	.layer { display: flex; align-items: center; justify-content: space-between; }
	.layer-stack .layer { padding-top: 1px; }

	.select { position: relative; display: block; width: 33px; height: 14px; border: 1px solid #777; }
	.select select { display: block; width: 100%; height: 100%; padding-left: 1px; appearance: none; opacity: 1; }

	.select::after {
		content: "";
		position: absolute;
		right: 3px;
		top: 5px;
		width: 5px;
		height: 3px;
		background: currentColor;
		clip-path: polygon(0 0, 100% 0, 50% 100%);
		pointer-events: none;
	}

	.mini { height: 15px; gap: 6px; }
	.pair { width: 40px; gap: 3px; padding-left: 4px; }
	.pair .mini { width: 21px; height: 21px; }
	.pair .mini:last-child { width: 32px; justify-content: flex-start; padding-left: 2px; }
	.arrows { width: 22px; }

	.playback { flex-direction: column; gap: 6px; padding-top: 2px; }
	.play-row { display: flex; align-items: center; width: 100%; }
	.play-row .caret { margin: 0 6px; }
	.play { gap: 3px; margin: 0 4px 0 15px; }
	.speed { display: flex; align-items: center; gap: 3px; flex: 1; min-width: 0; padding-right: 6px; white-space: nowrap; }
	.speed input { flex: 1; width: 60px; height: 12px; appearance: none; background: linear-gradient(#999, #999) center / 100% 2px no-repeat; }
	.speed input::-webkit-slider-thumb { appearance: none; width: 5px; height: 11px; background: #0b6a83; }

	/* selection bar */
	.selection-bar {
		display: flex;
		align-items: center;
		height: 19px;
		border-bottom: 1px solid #aaa;
	}

	.menu-button { width: 68px; gap: 4px; padding-left: 8px; justify-content: flex-start; border-right: 1px solid #ddd; }
	.selection-bar .select { background: #f5f5f5; border-color: #ccc; }
	.filter-type { width: 99px; }
	.filter-scope { width: 104px; }
	.filter-scope select { color: #999; }
	.bar-icon { display: flex; align-items: center; justify-content: center; width: 16px; height: 16px; }
	.selection-bar > .bar-icon { width: 22px; }
	.bar-tools { display: flex; align-items: center; padding-left: 6px; }
	.bar-tools .caret { margin: 0 3px; }
	.lined-left { margin-left: 4px; border-left: 1px solid #ddd; }
	.verify-name { margin-left: 4px; padding: 0 5px; border: solid #ddd; border-width: 0 1px; color: #bdbdbd; font-size: 7px; }
	.bar-end { margin: 4px 4px 0 auto; }

	/* main area */
	.body { position: relative; display: flex; flex: 1; }

	.rail {
		display: flex;
		flex-direction: column;
		flex: 0 0 25px;
		padding-bottom: 38px;
		background: #dcdcdc;
		border-right: 1px solid #c8c8c8;
		color: #666;
	}

	.rail-gear { height: 22px; }
	.rail-items { display: flex; flex: 1; flex-direction: column; justify-content: space-between; }
	.rail-item { height: 29px; }
	.rail-item.active { background: #fff; }

	.navigator {
		display: flex;
		flex-direction: column;
		flex: 0 0 224px;
		padding: 0 9px 7px 8px;
		border-right: 1px solid #bbb;
	}

	.nav-title { display: flex; align-items: center; height: 18px; margin-left: -4px; }
	h2 { flex: 1; margin: 0 0 0 1px; font-size: 8px; font-weight: 400; color: #111; }
	.maximise { width: 8px; height: 7px; border: 1px solid #333; border-top-width: 2px; }
	.nav-tools { display: flex; gap: 2px; height: 27px; align-items: center; color: #555; }
	.nav-tool { width: 21px; height: 21px; }
	.nav-tool.boxed { border: 1px solid #ccc; color: #bbb; }

	.tree { flex: 1; display: grid; border: 1px solid #e2e2e2; }
	table { width: 100%; height: 100%; table-layout: fixed; border-collapse: collapse; }
	th { height: 13px; padding: 0 0 0 4px; background: #f0f0f0; text-align: left; font-weight: 400; }
	td { height: 13px; padding: 0; border-right: 1px solid #eee; border-bottom: 1px solid #eee; line-height: 11px; white-space: nowrap; }
	tbody tr:nth-child(even) { background: #fafafa; }
	.name-col,
	td:first-child { width: 133px; border-right: 2px solid #777; }
	.path-col { width: 32px; padding-left: 3px; }
	td:nth-child(2) { padding-left: 2px; }
	tr.active .node-label,
	tr.active td:nth-child(n + 2) { background: #d3e9ea; }

	.node { display: flex; align-items: center; height: 12px; overflow: hidden; }
	.depth-0 { padding-left: 2px; }
	.depth-1 { padding-left: 15px; }
	.depth-2 { padding-left: 28px; }
	.depth-3 { padding-left: 50px; }
	.twisty { width: 10px; color: #777; text-align: center; }
	.node-icon { width: 11px; height: 11px; stroke-width: 1.5; color: #666; }
	.node-label { flex: 1; padding-left: 2px; }

	.scrollbar { display: flex; align-items: center; gap: 3px; height: 12px; padding: 0 4px; background: #f0f0f0; font-size: 11px; }
	.thumb { width: 12px; height: 10px; background: #ccc; }
	.scroll-end { margin-left: auto; }

	.workspace { display: flex; flex: 1; flex-direction: column; min-width: 0; }
	.tabs { display: flex; height: 18px; color: #222; background: linear-gradient(#0b6a83, #0b6a83) 23px 100% / 100% 2px no-repeat; }
	.tab-ghost { display: flex; align-items: center; width: 23px; padding-left: 3px; }
	.tab { gap: 2px; width: 64px; }
	.tab.current { gap: 3px; width: 80px; background: #0b6a83; color: #fff; }
	.icon.thin { stroke-width: 2; }
	.view { display: flex; flex: 1; }
	.gutter { display: flex; align-items: flex-end; flex: 0 0 24px; padding: 0 0 4px 5px; border-right: 1px solid #ddd; }
	.canvas { position: relative; flex: 1; border-right: 1px solid #ccc; }
	.part { position: absolute; left: 247px; top: 123px; width: 430px; height: 160px; }
	.axes { fill: none; stroke-width: 5; }
	.axes text,
	.triad text { font: 24px "Liberation Sans", sans-serif; stroke: none; }
	.triad { position: absolute; left: 7px; top: 403px; width: 160px; height: 110px; }

	/* dialog */
	.dialog {
		position: absolute;
		left: 178px;
		top: 18px;
		width: 215px;
		background: #f0f0f0;
		border: 1px solid #ddd;
		border-top: 0;
	}

	.dialog-title {
		display: flex;
		align-items: center;
		gap: 5px;
		height: 16px;
		margin: 0 -1px;
		padding: 0 6px 0 4px;
		background: #00627d;
		color: #fff;
		font-size: 9px;
	}

	.dialog-title span { flex: 1; }
	.ask { margin-right: 2px; font: 700 11px/12px "Open Sans", sans-serif; }
	.dialog-body { display: flex; flex-direction: column; gap: 3px; padding: 4px 4px 0; border-bottom: 1px solid #ddd; }
	.panel { background: #fff; border: solid #ddd; border-width: 0 1px 1px; }
	.section-head { width: 100%; gap: 5px; height: 13px; padding-left: 4px; justify-content: flex-start; color: #1d6b6b; font-weight: 700; }
	.section-head[aria-expanded="false"] { height: 15px; }
	.fields { padding: 5px 4px; }
	.field { display: flex; align-items: center; gap: 1px; height: 23px; }
	.field span { flex: 1; }
	.square { width: 22px; height: 21px; border: 1px solid #999; color: #555; }
	.tick { display: flex; align-items: center; gap: 3px; height: 14px; }
	.tick input { width: 9px; height: 9px; border: 1px solid #555; appearance: none; background: #fff; }
	.tick input:checked { box-shadow: inset 0 0 0 2px #fff; background: #00627d; }
	.offset-row { display: flex; align-items: center; gap: 2px; height: 26px; padding: 0 4px; }
	.offset-row label { flex: 1; }

	.offset-row input {
		width: 55px;
		height: 15px;
		padding: 1px;
		border: 1px solid #999;
		background: #0a72c8 content-box;
		color: #fff;
		font: 10px/11px "Liberation Mono", monospace;
		text-indent: 12px;
	}

	.lock { width: 16px; height: 16px; border: 1px solid #999; }
	.lock .icon { width: 9px; height: 9px; }
	.description { display: block; width: 100%; height: 16px; padding-left: 3px; border: 1px solid #888; }
	.fold { display: flex; align-items: center; justify-content: center; height: 7px; color: #111; }
	.dialog-actions { display: flex; justify-content: flex-end; gap: 4px; padding: 6px 10px 7px; }
	.dialog-actions button { width: 36px; height: 17px; border: 1px solid #00627d; background: #f7fafa; color: #00627d; }
	.dialog-actions .primary { background: #00627d; color: #fff; }

	.tooltip {
		position: absolute;
		left: 178px;
		top: 88px;
		padding: 4px;
		border: 1px solid #aaa;
		background: #fff;
		box-shadow: 2px 2px 2px #999;
		color: #555;
		white-space: nowrap;
	}

	.cursor { position: absolute; left: 174px; top: 71px; width: 10px; height: 14px; }

	/* status and taskbar */
	.status { display: flex; height: 15px; border-top: 1px solid #bbb; color: #111; line-height: 14px; }
	.status span { flex: 0 0 622px; padding-left: 2px; }

	.taskbar {
		display: flex;
		height: 27px;
		background: linear-gradient(90deg, #213a3e, #1d3340 50%, #1a2544);
		color: #fff;
	}

	.start { width: 32px; }
	.task-search { display: flex; align-items: center; width: 192px; padding-left: 8px; gap: 7px; background: #f2f2f2; color: #222; }
	.task-search input { flex: 1; font-size: 9px; }
	.task-search input::placeholder { color: #333; }
	.scene { width: 50px; height: 27px; }
	.apps { display: flex; gap: 4px; width: 375px; padding-left: 15px; }
	.app-button { flex: 1; border-bottom: 2px solid transparent; }
	.app-button.running { border-color: #6fb0dc; }
	.app-button.front { background: #4c6166; }
	.app-icon { width: 17px; height: 17px; }

	.tray { display: flex; align-items: center; gap: 6px; margin-left: auto; padding-right: 9px; }
	.ime.boxed { margin-right: 10px; padding: 0 1px; background: #e8e8e8; color: #1a2544; line-height: 10px; }
	.tray-icon { width: 11px; height: 11px; }
	.clock { display: flex; flex-direction: column; align-items: center; width: 44px; }
	.notice { position: relative; width: 22px; }
	.note-icon { width: 13px; height: 13px; }

	.badge {
		position: absolute;
		left: 6px;
		top: 4px;
		width: 11px;
		height: 11px;
		border: 1px solid #888;
		border-radius: 50%;
		background: #1a2544;
		line-height: 9px;
		text-align: center;
	}
</style>
